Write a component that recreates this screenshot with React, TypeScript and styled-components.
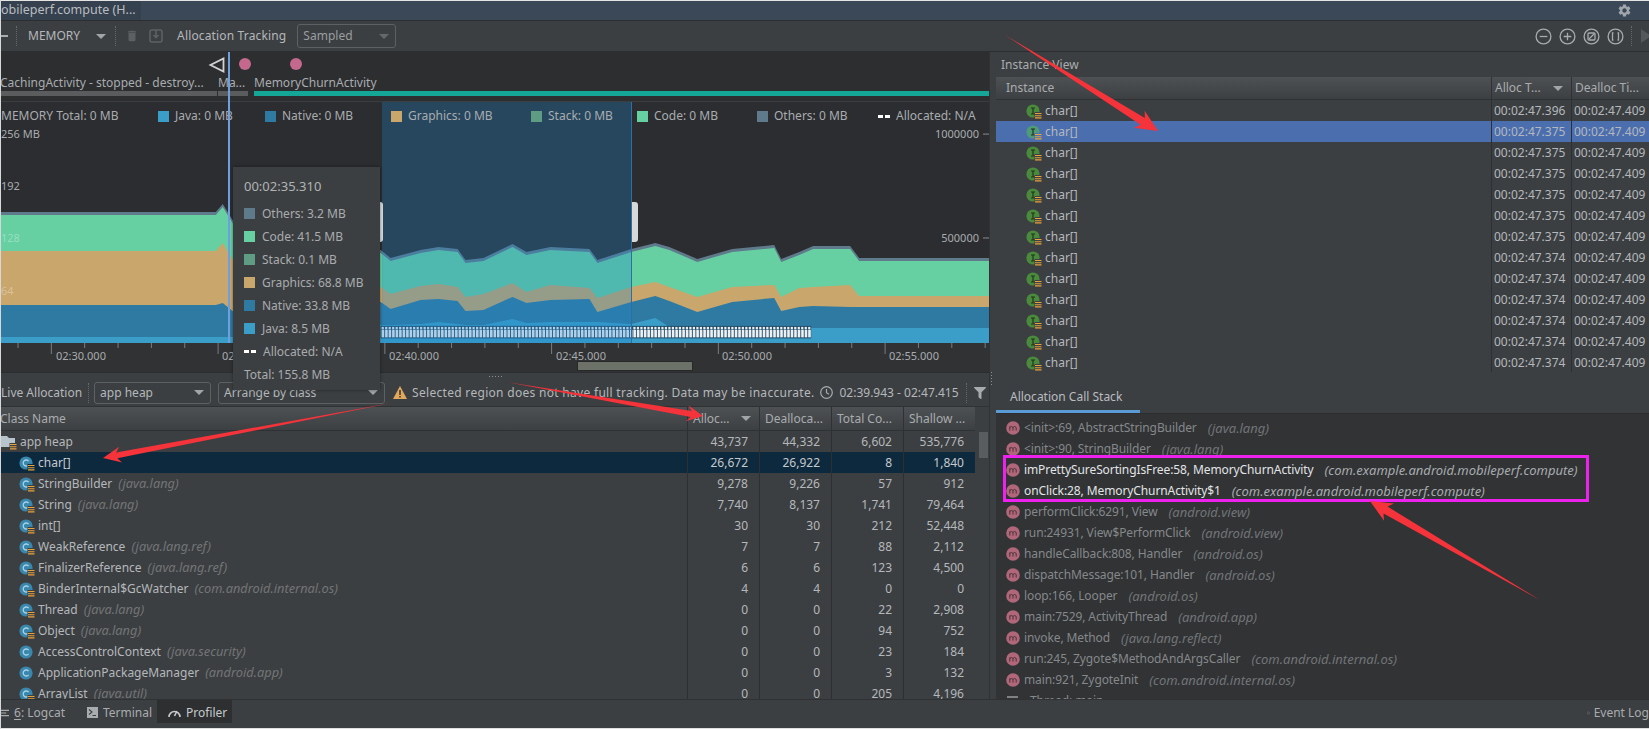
import React from 'react';
import styled, { createGlobalStyle } from 'styled-components';
import { MdSettings, MdDelete } from 'react-icons/md';
import { FaFilter } from 'react-icons/fa';

const GlobalStyle = createGlobalStyle`
  html, body { margin: 0; padding: 0; background: #3c3f41; }
  * { box-sizing: border-box; }
`;

const Page = styled.div`
  position: relative;
  width: 1649px;
  height: 729px;
  overflow: hidden;
  display: flex;
  flex-direction: column;
  background: #3c3f41;
  border-left: 1px solid #d8d8d8;
  color: #b4b8bc;
  font: 12px/16px 'Noto Sans', 'Liberation Sans', sans-serif;
  white-space: nowrap;
`;

const TitleBar = styled.div`
  height: 21px;
  flex: none;
  display: flex;
  justify-content: space-between;
  align-items: center;
  background: #3b4858;
  border-top: 1px solid #e4e4e4;
  border-bottom: 1px solid #2b2d30;
`;
const TitleTab = styled.div`
  width: 140px;
  height: 100%;
  background: #35414e;
  color: #b9bcc0;
  font-size: 12.5px;
  line-height: 17px;
`;
const GearSlot = styled.div`
  display: flex;
  color: #a0a6ac;
  margin-right: 17px;
`;

const MainBar = styled.div`
  height: 31px;
  flex: none;
  display: flex;
  align-items: center;
  background: #3c3f41;
  border-bottom: 1px solid #2b2d30;
`;
const DashMark = styled.div`
  width: 7px;
  height: 2px;
  background: #a9adb0;
  margin-right: 8px;
`;
const Dotted = styled.div<{ $gap?: number; $before?: number }>`
  width: 1px;
  height: 20px;
  flex: none;
  border-left: 1px dotted #66696b;
  margin-left: ${(p) => p.$before ?? 0}px;
  margin-right: ${(p) => p.$gap ?? 0}px;
`;
const Caret = styled.span<{ $dim?: boolean }>`
  width: 0;
  height: 0;
  flex: none;
  border-left: 5px solid transparent;
  border-right: 5px solid transparent;
  border-top: 5px solid ${(p) => (p.$dim ? '#66696b' : '#a2a5a8')};
`;
const BarLabel = styled.span<{ $left?: number; $right?: number; $spread?: number }>`
  margin-left: ${(p) => p.$left ?? 0}px;
  margin-right: ${(p) => p.$right ?? 0}px;
  letter-spacing: ${(p) => p.$spread ?? 0}px;
  color: #b4b8bc;
`;
const DimIcon = styled.span<{ $right: number }>`
  display: flex;
  color: #5d6063;
  margin-right: ${(p) => p.$right}px;
`;
const Combo = styled.div<{ $w: number; $h: number; $right?: number; $dim?: boolean }>`
  width: ${(p) => p.$w}px;
  height: ${(p) => p.$h}px;
  flex: none;
  margin-right: ${(p) => p.$right ?? 0}px;
  display: flex;
  align-items: center;
  justify-content: space-between;
  padding: 0 6px 0 5px;
  border: 1px solid #5e6163;
  border-radius: 3px;
  color: ${(p) => (p.$dim ? '#9a9da0' : 'inherit')};
`;
const ZoomGroup = styled.div`
  margin-left: auto;
  margin-right: -2px;
  display: flex;
  align-items: center;
  gap: 7px;
  color: #a7abae;
`;

const Body = styled.div`
  flex: 1;
  min-height: 0;
  display: flex;
`;
const LeftPane = styled.div`
  position: relative;
  width: 988px;
  flex: none;
  display: flex;
  flex-direction: column;
`;
const SashV = styled.div`
  width: 7px;
  flex: none;
  background: #3c3f41;
  border-left: 1px solid #303234;
  display: flex;
  align-items: flex-start;
  padding-top: 319px;
`;
const RightPane = styled.div`
  flex: 1;
  min-width: 0;
  display: flex;
  flex-direction: column;
`;

const EventsRow = styled.div`
  position: relative;
  height: 50px;
  flex: none;
  background: #2c2e30;
  border-bottom: 1px solid #3b3d3f;
`;
const EventMarks = styled.svg`
  position: absolute;
  left: 0;
  top: 0;
`;
const Activities = styled.div`
  position: absolute;
  left: -1px;
  right: 0;
  top: 23px;
  display: flex;
`;
const Activity = styled.div<{ $w: number; $on?: boolean; $flex?: boolean }>`
  width: ${(p) => (p.$flex ? 'auto' : `${p.$w}px`)};
  flex: ${(p) => (p.$flex ? 1 : 'none')};
  margin-right: ${(p) => (p.$on ? 0 : p.$w > 100 ? 1 : 6)}px;
  color: #a9acaf;
  span { display: block; height: 16px; }
  &::after {
    content: '';
    display: block;
    height: 5px;
    background: ${(p) => (p.$on ? '#14a798' : '#5a5c5e')};
  }
`;

const Chart = styled.div`
  position: relative;
  height: 241px;
  flex: none;
  background: #2b2d30;
`;
const ChartArt = styled.svg`
  position: absolute;
  left: 0;
  top: 0;
`;
const Legend = styled.div`
  position: relative;
  z-index: 2;
  display: flex;
  height: 28px;
  color: #a9acaf;
`;
const LegendItem = styled.div<{ $w: number }>`
  width: ${(p) => p.$w}px;
  flex: none;
  display: flex;
  align-items: center;
  gap: 6px;
`;
const Swatch = styled.span<{ $color: string }>`
  width: 11px;
  height: 11px;
  flex: none;
  background: ${(p) => p.$color};
`;
const Dashes = styled.span`
  width: 12px;
  height: 3px;
  flex: none;
  background: linear-gradient(90deg, #fff 0 5px, transparent 5px 7px, #fff 7px);
`;
const AxisLabel = styled.span<{ $top: number; $faint?: boolean; $right?: boolean }>`
  position: absolute;
  top: ${(p) => p.$top}px;
  ${(p) => (p.$right ? 'right: 10px;' : 'left: 0;')}
  font-size: 11px;
  line-height: 14px;
  color: ${(p) => (p.$faint ? 'rgba(255,255,255,.32)' : '#a9acaf')};
`;
const Selection = styled.div`
  position: absolute;
  left: 381px;
  width: 250px;
  top: 0;
  bottom: 0;
  background: rgba(30, 131, 204, 0.3);
  border-right: 1px solid #2c6ea6;
`;
const Handle = styled.div<{ $left: number; $w: number }>`
  position: absolute;
  left: ${(p) => p.$left}px;
  width: ${(p) => p.$w}px;
  top: 100px;
  height: 40px;
  background: #d6d8da;
  border-radius: 0 3px 3px 0;
`;
const Cursor = styled.div`
  position: absolute;
  left: 227px;
  top: 0;
  height: 291px;
  width: 2px;
  background: #6e9fdf;
  z-index: 2;
`;

const Tip = styled.div`
  position: absolute;
  left: 232px;
  top: 115px;
  width: 147px;
  height: 223px;
  padding: 9px 11px;
  background: #3c3f41;
  box-shadow: 0 0 3px rgba(0, 0, 0, 0.45);
  z-index: 3;
`;
const TipTime = styled.div`
  height: 20px;
  margin-bottom: 6px;
  font-size: 13px;
  line-height: 20px;
  color: #b0b3b6;
`;
const TipRow = styled.div`
  height: 23px;
  display: flex;
  align-items: center;
  gap: 7px;
  color: #a9acaf;
`;

const TimeAxis = styled.div`
  position: relative;
  height: 30px;
  flex: none;
  background: #303234;
  border-bottom: 1px solid #2b2d30;
  font-size: 11px;
  color: #a9acaf;
`;
const AxisTicks = styled.svg`
  position: absolute;
  left: 0;
  top: 0;
`;
const TimeLabel = styled.span<{ $left: number }>`
  position: absolute;
  left: ${(p) => p.$left}px;
  top: 5px;
`;
const ScrollThumb = styled.div`
  position: absolute;
  left: 576px;
  top: 18px;
  width: 116px;
  height: 10px;
  background: #6d7269;
  border: 1px solid #26282a;
`;

const Sash = styled.div`
  height: 6px;
  flex: none;
  display: flex;
  justify-content: center;
  align-items: center;
  background: #3c3f41;
`;
const Grip = styled.span<{ $vertical?: boolean }>`
  width: ${(p) => (p.$vertical ? '3px' : '14px')};
  height: ${(p) => (p.$vertical ? '14px' : '3px')};
  background-image: radial-gradient(#8b8e90 0.7px, transparent 0.8px);
  background-size: 3px 3px;
`;

const FilterBar = styled.div`
  height: 28px;
  flex: none;
  display: flex;
  align-items: center;
  border-bottom: 1px solid #2f3133;
`;
const WarnMark = styled.svg`
  margin: 0 5px 0 8px;
  flex: none;
`;
const ClockMark = styled.svg`
  margin: 0 6px;
  flex: none;
`;
const FilterSlot = styled.span`
  display: flex;
  margin-left: 7px;
  color: #a7abae;
`;

const ClassTable = styled.div`
  position: relative;
  flex: 1;
  min-height: 0;
  overflow: hidden;
`;
const grid = 'grid-template-columns: 686px 72px 72px 72px 72px;';
const TableHead = styled.div`
  display: grid;
  ${grid}
  width: 974px;
  height: 24px;
  background: linear-gradient(#4d5154, #3d4042);
  border-bottom: 1px solid #2f3133;
`;
const HeadCell = styled.div<{ $pad?: number }>`
  display: flex;
  align-items: center;
  justify-content: space-between;
  padding: 0 8px 0 ${(p) => p.$pad ?? 5}px;
  border-left: 1px solid #2f3133;
  color: #a9acaf;
`;
const NameHead = styled.div`
  display: flex;
  align-items: center;
  color: #a9acaf;
  margin-left: -1px;
`;
const TableRow = styled.div<{ $on?: boolean }>`
  display: grid;
  ${grid}
  width: 974px;
  height: 21px;
  line-height: 21px;
  background: ${(p) => (p.$on ? '#0d293e' : 'transparent')};
  color: ${(p) => (p.$on ? '#c6cacd' : '#b4b8bc')};
`;
const NameCell = styled.div<{ $indent: number }>`
  display: flex;
  align-items: center;
  padding-left: ${(p) => p.$indent}px;
  gap: 3px;
`;
const Pkg = styled.i`
  color: #727577;
  font-size: 12.8px;
  margin-left: 3px;
`;
const NumCell = styled.div`
  text-align: right;
  padding-right: 11px;
  border-left: 1px solid #2d2f31;
`;
const ScrollPip = styled.div`
  position: absolute;
  left: 978px;
  top: 25px;
  width: 9px;
  height: 26px;
  background: #5a5d5f;
`;

const InstancePanel = styled.div`
  height: 320px;
  flex: none;
  overflow: hidden;
`;
const PanelTitle = styled.div`
  height: 25px;
  padding-left: 5px;
  line-height: 25px;
  color: #a9acaf;
`;
const instGrid = 'grid-template-columns: 495px 80px 1fr;';
const InstanceHead = styled.div`
  display: grid;
  ${instGrid}
  height: 23px;
  background: linear-gradient(#4d5154, #3d4042);
  border-bottom: 1px solid #2f3133;
  color: #a9acaf;
`;
const InstanceTitle = styled.span`
  padding-left: 10px;
  line-height: 22px;
`;
const InstRow = styled.div<{ $on?: boolean }>`
  display: grid;
  ${instGrid}
  height: 21px;
  line-height: 21px;
  background: ${(p) => (p.$on ? '#4b6eaf' : 'transparent')};
`;
const InstName = styled.div`
  display: flex;
  align-items: center;
  gap: 3px;
  padding-left: 30px;
`;
const InstTime = styled.div`
  padding-left: 2px;
  border-left: 1px solid #2d2f31;
`;

const StackPanel = styled.div`
  position: relative;
  flex: 1;
  min-height: 0;
  overflow: hidden;
  display: flex;
  flex-direction: column;
  margin-top: 7px;
  background: #313335;
`;
const TabStrip = styled.div`
  height: 35px;
  flex: none;
  background: #3c3f41;
  border-bottom: 1px solid #2b2d2f;
`;
const TabItem = styled.div`
  width: 144px;
  height: 34px;
  padding: 10px 0 0 14px;
  border-bottom: 3px solid #5b9bd5;
  color: #b9bcc0;
`;
const StackList = styled.div`
  padding: 3px 0 0 10px;
`;
const StackRow = styled.div<{ $hot?: boolean }>`
  display: flex;
  align-items: center;
  gap: 4px;
  height: 21px;
  color: ${(p) => (p.$hot ? '#e2e4e6' : '#85888a')};
  letter-spacing: -0.1px;
`;
const StackPkg = styled.i<{ $hot?: boolean }>`
  color: ${(p) => (p.$hot ? '#a8abae' : '#727577')};
  font-size: 13px;
  letter-spacing: 0;
  margin-left: 7px;
`;
const ThreadName = styled.span`
  margin-left: 6px;
`;
const Highlight = styled.div`
  position: absolute;
  left: 7px;
  top: 76px;
  width: 586px;
  height: 47px;
  border: 3px solid #ee22ee;
`;

const ToolStrip = styled.div`
  height: 30px;
  flex: none;
  display: flex;
  align-items: flex-start;
  background: #3c3f41;
  border-top: 1px solid #2f3133;
  box-shadow: inset 0 -1px 0 #e0e0e0;
`;
const ToolTab = styled.div<{ $on?: boolean; $left: number; $w: number }>`
  width: ${(p) => p.$w}px;
  margin-left: ${(p) => p.$left}px;
  height: 23px;
  padding-top: 2px;
  display: flex;
  align-items: center;
  gap: 5px;
  padding-left: ${(p) => (p.$on ? 11 : 0)}px;
  background: ${(p) => (p.$on ? '#2d2f31' : 'transparent')};
  color: ${(p) => (p.$on ? '#c6cacd' : '#a9acaf')};
  u { text-underline-offset: 2px; }
`;
const EventLog = styled.div`
  margin-left: auto;
  height: 23px;
  padding-top: 2px;
  width: 62px;
  display: flex;
  align-items: center;
  gap: 4px;
  color: #a9acaf;
`;

const ArrowLayer = styled.svg`
  position: absolute;
  left: -1px;
  top: 0;
  z-index: 5;
  pointer-events: none;
`;

type Row = { name: string; pkg?: string; nums: string[]; lines?: boolean; on?: boolean };
const classRows: Row[] = [
  { name: 'char[]', nums: ['26,672', '26,922', '8', '1,840'], lines: true, on: true },
  { name: 'StringBuilder', pkg: '(java.lang)', nums: ['9,278', '9,226', '57', '912'], lines: true },
  { name: 'String', pkg: '(java.lang)', nums: ['7,740', '8,137', '1,741', '79,464'], lines: true },
  { name: 'int[]', nums: ['30', '30', '212', '52,448'], lines: true },
  { name: 'WeakReference', pkg: '(java.lang.ref)', nums: ['7', '7', '88', '2,112'], lines: true },
  { name: 'FinalizerReference', pkg: '(java.lang.ref)', nums: ['6', '6', '123', '4,500'], lines: true },
  { name: 'BinderInternal$GcWatcher', pkg: '(com.android.internal.os)', nums: ['4', '4', '0', '0'], lines: true },
  { name: 'Thread', pkg: '(java.lang)', nums: ['0', '0', '22', '2,908'], lines: true },
  { name: 'Object', pkg: '(java.lang)', nums: ['0', '0', '94', '752'], lines: true },
  { name: 'AccessControlContext', pkg: '(java.security)', nums: ['0', '0', '23', '184'] },
  { name: 'ApplicationPackageManager', pkg: '(android.app)', nums: ['0', '0', '3', '132'] },
  { name: 'ArrayList', pkg: '(java.util)', nums: ['0', '0', '205', '4,196'], lines: true },
];

const instanceTimes = ['396', '375', '375', '375', '375', '375', '375', '374', '374', '374', '374', '374', '374'];

const stackRows: { text: string; pkg: string; hot?: boolean }[] = [
  { text: '<init>:69, AbstractStringBuilder', pkg: '(java.lang)' },
  { text: '<init>:90, StringBuilder', pkg: '(java.lang)' },
  { text: 'imPrettySureSortingIsFree:58, MemoryChurnActivity', pkg: '(com.example.android.mobileperf.compute)', hot: true },
  { text: 'onClick:28, MemoryChurnActivity$1', pkg: '(com.example.android.mobileperf.compute)', hot: true },
  { text: 'performClick:6291, View', pkg: '(android.view)' },
  { text: 'run:24931, View$PerformClick', pkg: '(android.view)' },
  { text: 'handleCallback:808, Handler', pkg: '(android.os)' },
  { text: 'dispatchMessage:101, Handler', pkg: '(android.os)' },
  { text: 'loop:166, Looper', pkg: '(android.os)' },
  { text: 'main:7529, ActivityThread', pkg: '(android.app)' },
  { text: 'invoke, Method', pkg: '(java.lang.reflect)' },
  { text: 'run:245, Zygote$MethodAndArgsCaller', pkg: '(com.android.internal.os)' },
  { text: 'main:921, ZygoteInit', pkg: '(com.android.internal.os)' },
];

const legend = [
  { label: 'Java: 0 MB', color: '#3a9ec9', w: 107 },
  { label: 'Native: 0 MB', color: '#2f7aa3', w: 126 },
  { label: 'Graphics: 0 MB', color: '#c9a66b', w: 140 },
  { label: 'Stack: 0 MB', color: '#5e9c83', w: 106 },
  { label: 'Code: 0 MB', color: '#66d0a3', w: 120 },
  { label: 'Others: 0 MB', color: '#5f7a8a', w: 121 },
];

const tipRows = [
  { label: 'Others: 3.2 MB', color: '#5f7a8a' },
  { label: 'Code: 41.5 MB', color: '#66d0a3' },
  { label: 'Stack: 0.1 MB', color: '#5e9c83' },
  { label: 'Graphics: 68.8 MB', color: '#c9a66b' },
  { label: 'Native: 33.8 MB', color: '#2f7aa3' },
  { label: 'Java: 8.5 MB', color: '#3a9ec9' },
];

// x, then tops of code / graphics / native / java, in page coordinates
const series: number[][] = [
  [0, 215, 251, 305, 337], [215, 215, 251, 305, 337], [222, 207, 243, 303, 337], [233, 225, 262, 312, 337],
  [380, 253, 287, 302, 325], [390, 261, 294, 309, 325], [420, 253, 286, 300, 324], [438, 250, 284, 299, 322],
  [457, 252, 287, 301, 324], [465, 263, 297, 311, 325], [483, 261, 294, 310, 325], [512, 247, 283, 297, 319],
  [526, 255, 292, 303, 323], [550, 250, 285, 300, 322], [589, 252, 288, 299, 322], [597, 263, 298, 312, 322],
  [631, 252, 287, 302, 324], [655, 246, 282, 296, 318], [669, 250, 287, 301, 327], [697, 262, 297, 312, 327],
  [732, 252, 287, 302, 328], [774, 248, 285, 298, 328], [781, 262, 297, 311, 328], [799, 255, 288, 307, 328],
  [813, 249, 287, 306, 328], [850, 249, 285, 307, 328], [859, 261, 296, 307, 328], [989, 261, 296, 307, 328],
];

const CHART_TOP = 102;
const area = (col: number, lift = 0) => {
  const top = series.map((p) => `${p[0]},${p[col] - CHART_TOP - lift}`).join(' ');
  return `0,241 ${top} 989,241`;
};

const ListMark = ({ bg }: { bg: string }) => (
  <>
    <rect x="8.5" y="9" width="7.5" height="7" fill={bg} />
    <path d="M9 10.5h6.5M9 12.7h6.5M9 14.9h6.5" stroke="#e8a33d" strokeWidth="1.1" />
  </>
);

const ClassIcon = ({ lines, bg = '#3c3f41' }: { lines?: boolean; bg?: string }) => (
  <svg width="16" height="16" viewBox="0 0 16 16">
    <circle cx="7" cy="8" r="6.6" fill="#3a87ad" />
    <path d="M9.6 6.2A3 3 0 1 0 9.6 9.8" fill="none" stroke="#a8d2e6" strokeWidth="1.3" />
    {lines && <ListMark bg={bg} />}
  </svg>
);

const InstanceIcon = ({ bg, selected }: { bg: string; selected?: boolean }) => (
  <svg width="16" height="16" viewBox="0 0 16 16">
    <circle cx="7" cy="8" r="6.6" fill={selected ? '#4f9a77' : '#4a8a3c'} />
    <path d="M5 5h4M7 5v6M5 11h4" fill="none" stroke="#23331f" strokeWidth="1.2" />
    <ListMark bg={bg} />
  </svg>
);

const MethodIcon = () => (
  <svg width="14" height="14" viewBox="0 0 14 14">
    <circle cx="7" cy="7" r="6.8" fill="#b0677a" />
    <path d="M3.8 9.6V5.4M3.8 6.4q1.6-1.8 3.2 0v3.2M7 6.4q1.6-1.8 3.2 0v3.2" fill="none" stroke="#4d3238" strokeWidth="1" />
  </svg>
);

const FolderIcon = () => (
  <svg width="16" height="16" viewBox="0 0 16 16">
    <path d="M0 2h6l2 2h6v9H0z" fill="#b8c4cc" />
    <ListMark bg="#3c3f41" />
  </svg>
);

const RoundIcon = ({ children }: { children: React.ReactNode }) => (
  <svg width="17" height="17" viewBox="0 0 17 17" fill="none" stroke="currentColor" strokeWidth="1.3">
    <circle cx="8.5" cy="8.5" r="7.4" />
    {children}
  </svg>
);

const arrows = [
  { tail: [1005, 35], tip: [1158, 131], len: 22, half: 10, neck: 4 },
  { tail: [391, 403], tip: [103, 458], len: 18, half: 8, neck: 3 },
  { tail: [507, 382], tip: [703, 416], len: 16, half: 8, neck: 3 },
  { tail: [1540, 600], tip: [1370, 501], len: 22, half: 10, neck: 4 },
];

const arrowPoints = ({ tail, tip, len, half, neck }: (typeof arrows)[number]) => {
  const dx = tip[0] - tail[0];
  const dy = tip[1] - tail[1];
  const d = Math.hypot(dx, dy);
  const ux = dx / d;
  const uy = dy / d;
  const at = (back: number, side: number) =>
    `${tip[0] - ux * back - uy * side},${tip[1] - uy * back + ux * side}`;
  return [
    `${tail[0]},${tail[1]}`,
    at(len - 4, neck),
    at(len, half),
    `${tip[0]},${tip[1]}`,
    at(len, -half),
    at(len - 4, -neck),
  ].join(' ');
};

const majorTicks = [50, 217, 384, 550, 717, 884];
const timeLabels = [
  { left: 55, text: '02:30.000' },
  { left: 221, text: '02:35.000' },
  { left: 388, text: '02:40.000' },
  { left: 555, text: '02:45.000' },
  { left: 721, text: '02:50.000' },
  { left: 888, text: '02:55.000' },
];

export default function App() {
  return (
    <Page>
      <GlobalStyle />
      <TitleBar>
        <TitleTab>obileperf.compute (H...</TitleTab>
        <GearSlot><MdSettings size={15} /></GearSlot>
      </TitleBar>

      <MainBar>
        <DashMark />
        <Dotted $gap={11} />
        <BarLabel $right={16}>MEMORY</BarLabel>
        <Caret />
        <Dotted $before={9} $gap={9} />
        <DimIcon $right={10}><MdDelete size={14} /></DimIcon>
        <DimIcon $right={14}>
          <svg width="14" height="14" viewBox="0 0 14 14" fill="none" stroke="currentColor" strokeWidth="1.6">
            <rect x="1" y="1" width="12" height="12" rx="2" />
            <path d="M7 1v7M4.5 6 7 8.6 9.500 6" />
          </svg>
        </DimIcon>
        <BarLabel $right={11} $spread={0.15}>Allocation Tracking</BarLabel>
        <Combo $w={99} $h={24} $dim>Sampled <Caret $dim /></Combo>
        <ZoomGroup>
          <RoundIcon><path d="M4.700 8.500h7.600" /></RoundIcon>
          <RoundIcon><path d="M4.700 8.500h7.600M8.500 4.700v7.600" /></RoundIcon>
          <RoundIcon><rect x="5" y="5" width="7" height="7" rx="1" /><path d="m6 11 5-5" /></RoundIcon>
          <RoundIcon><path d="M6.500 5h-1v7h1M10.500 5h1v7h-1" /></RoundIcon>
          <Dotted $gap={2} />
          <svg width="10" height="16" viewBox="0 0 10 16"><path d="M0 1l10 7-10 7z" fill="#55585a" /></svg>
        </ZoomGroup>
      </MainBar>

      <Body>
        <LeftPane>
          <EventsRow>
            <EventMarks width="989" height="30">
              <path d="M222.500 6.500v13L209.500 13z" fill="none" stroke="#d0d2d4" strokeWidth="1.800" />
              <circle cx="244" cy="12" r="6" fill="#c4698d" />
              <circle cx="295" cy="12" r="6" fill="#c4698d" />
            </EventMarks>
            <Activities>
              <Activity $w={217}><span>CachingActivity - stopped - destroy...</span></Activity>
              <Activity $w={30}><span>Ma...</span></Activity>
              <Activity $w={0} $on $flex><span>MemoryChurnActivity</span></Activity>
            </Activities>
          </EventsRow>

          <Chart>
            <ChartArt width="988" height="241" viewBox="0 0 989 241">
              <polygon points={area(1, 3)} fill="#5f7a8a" />
              <polygon points={area(1)} fill="#66d0a3" />
              <polygon points={area(2)} fill="#c9a66b" />
              <polygon points={area(3)} fill="#2f7aa3" />
              <polygon points={area(4)} fill="#3a9ec9" />
              <rect x="380" y="224" width="431" height="12.500" fill="#1e4a66" />
              {Array.from({ length: 123 }, (_, i) => (
                <g key={i} fill="#eef1f4">
                  <rect x={381 + i * 3.5} y="225" width="2.200" height="2.500" />
                  <rect x={381 + i * 3.5} y="228" width="2.600" height="7.500" />
                </g>
              ))}
              <path d="M983 32h6M983 136h6" stroke="#8a8d90" />
            </ChartArt>
            <Legend>
              <LegendItem $w={157}>MEMORY Total: 0 MB</LegendItem>
              {legend.map((l) => (
                <LegendItem key={l.label} $w={l.w}><Swatch $color={l.color} />{l.label}</LegendItem>
              ))}
              <LegendItem $w={110}><Dashes />Allocated: N/A</LegendItem>
            </Legend>
            <AxisLabel $top={25}>256 MB</AxisLabel>
            <AxisLabel $top={77}>192</AxisLabel>
            <AxisLabel $top={129} $faint>128</AxisLabel>
            <AxisLabel $top={182} $faint>64</AxisLabel>
            <AxisLabel $top={25} $right>1000000</AxisLabel>
            <AxisLabel $top={129} $right>500000</AxisLabel>
            <Selection />
            <Handle $left={378} $w={4} />
            <Handle $left={631} $w={6} />
          </Chart>

          <TimeAxis>
            <AxisTicks width="988" height="16">
              {Array.from({ length: 30 }, (_, i) => {
                const x = 17 + i * 33.35;
                const major = majorTicks.some((m) => Math.abs(m - x) < 2);
                return <path key={i} d={`M${x} 0v${major ? 11 : 5}`} stroke="#7a7d80" />;
              })}
            </AxisTicks>
            {timeLabels.map((t) => (
              <TimeLabel key={t.text} $left={t.left}>{t.text}</TimeLabel>
            ))}
            <ScrollThumb />
          </TimeAxis>

          <Sash><Grip /></Sash>

          <FilterBar>
            <BarLabel $right={6}>Live Allocation</BarLabel>
            <Dotted $gap={5} />
            <Combo $w={117} $h={22} $right={7}>app heap <Caret /></Combo>
            <Combo $w={167} $h={22}>Arrange by class <Caret /></Combo>
            <WarnMark width="14" height="13" viewBox="0 0 14 13">
              <path d="M7 0l7 13H0z" fill="#e0a85c" />
              <path d="M6.300 4h1.400v5H6.300zM6.300 10h1.400v1.500H6.300z" fill="#2b2d30" />
            </WarnMark>
            <BarLabel $spread={0.3}>Selected region does not have full tracking. Data may be inaccurate.</BarLabel>
            <ClockMark width="13" height="13" viewBox="0 0 13 13" fill="none" stroke="#a7abae" strokeWidth="1.200">
              <circle cx="6.500" cy="6.500" r="5.800" />
              <path d="M6.500 3v3.700l2.500 1.500" />
            </ClockMark>
            <span>02:39.943 - 02:47.415</span>
            <Dotted $before={7} />
            <FilterSlot><FaFilter size={12} /></FilterSlot>
          </FilterBar>

          <ClassTable>
            <TableHead>
              <NameHead>Class Name</NameHead>
              <HeadCell>Alloc... <Caret /></HeadCell>
              <HeadCell>Dealloca...</HeadCell>
              <HeadCell>Total Co...</HeadCell>
              <HeadCell>Shallow ...</HeadCell>
            </TableHead>
            <TableRow>
              <NameCell $indent={0}><FolderIcon />app heap</NameCell>
              {['43,737', '44,332', '6,602', '535,776'].map((n) => <NumCell key={n}>{n}</NumCell>)}
            </TableRow>
            {classRows.map((r) => (
              <TableRow key={r.name} $on={r.on}>
                <NameCell $indent={18}>
                  <ClassIcon lines={r.lines} bg={r.on ? '#0d293e' : '#3c3f41'} />
                  {r.name}
                  {r.pkg && <Pkg>{r.pkg}</Pkg>}
                </NameCell>
                {r.nums.map((n, i) => <NumCell key={i}>{n}</NumCell>)}
              </TableRow>
            ))}
            <ScrollPip />
          </ClassTable>

          <Cursor />
          <Tip>
            <TipTime>00:02:35.310</TipTime>
            {tipRows.map((t) => (
              <TipRow key={t.label}><Swatch $color={t.color} />{t.label}</TipRow>
            ))}
            <TipRow><Dashes />Allocated: N/A</TipRow>
            <TipRow>Total: 155.8 MB</TipRow>
          </Tip>
        </LeftPane>

        <SashV><Grip $vertical /></SashV>

        <RightPane>
          <InstancePanel>
            <PanelTitle>Instance View</PanelTitle>
            <InstanceHead>
              <InstanceTitle>Instance</InstanceTitle>
              <HeadCell $pad={3}>Alloc T... <Caret /></HeadCell>
              <HeadCell $pad={3}>Dealloc Ti...</HeadCell>
            </InstanceHead>
            {instanceTimes.map((t, i) => (
              <InstRow key={i} $on={i === 1}>
                <InstName>
                  <InstanceIcon bg={i === 1 ? '#4b6eaf' : '#3c3f41'} selected={i === 1} />
                  char[]
                </InstName>
                <InstTime>00:02:47.{t}</InstTime>
                <InstTime>00:02:47.409</InstTime>
              </InstRow>
            ))}
          </InstancePanel>
          <StackPanel>
            <TabStrip><TabItem>Allocation Call Stack</TabItem></TabStrip>
            <StackList>
              {stackRows.map((s) => (
                <StackRow key={s.text} $hot={s.hot}>
                  <MethodIcon />
                  {s.text}
                  <StackPkg $hot={s.hot}>{s.pkg}</StackPkg>
                </StackRow>
              ))}
              <StackRow>
                <svg width="14" height="14" viewBox="0 0 14 14"><path d="M1 3h11M3 7h9M1 11h11" stroke="#9a9c9e" strokeWidth="1.300" /></svg>
                <ThreadName>Thread: main</ThreadName>
              </StackRow>
            </StackList>
            <Highlight />
          </StackPanel>
        </RightPane>
      </Body>

      <ToolStrip>
        <ToolTab $left={-1} $w={65}>
          <svg width="10" height="10" viewBox="0 0 10 10"><path d="M0 2h10M0 5h7M0 8h10" stroke="#a9acaf" strokeWidth="1.300" /></svg>
          <span><u>6</u>: Logcat</span>
        </ToolTab>
        <ToolTab $left={22} $w={68}>
          <svg width="11" height="11" viewBox="0 0 11 11">
            <rect width="11" height="11" fill="#a9acaf" />
            <path d="M2 2.500 5 5 2 7.500M5.500 8.500h3.500" fill="none" stroke="#3c3f41" strokeWidth="1.100" />
          </svg>
          Terminal
        </ToolTab>
        <ToolTab $left={2} $w={75} $on>
          <svg width="13" height="11" viewBox="0 0 13 11" fill="none" stroke="#c6cacd" strokeWidth="1.600">
            <path d="M1 10a5.500 5.500 0 0 1 11 0M6.500 9 9 4" />
          </svg>
          Profiler
        </ToolTab>
        <EventLog>
          <svg width="13" height="14" viewBox="0 0 13 14" fill="none" stroke="#a9acaf" strokeWidth="1.200">
            <path d="M6.500 1a5.500 5.500 0 1 0 0 11H12V6.500A5.500 5.500 0 0 0 6.500 1z" />
          </svg>
          Event Log
        </EventLog>
      </ToolStrip>

      <ArrowLayer width="1649" height="729" viewBox="0 0 1649 729">
        {arrows.map((a) => (
          <polygon key={a.tip.join()} points={arrowPoints(a)} fill="#f5333a" />
        ))}
      </ArrowLayer>
    </Page>
  );
}
